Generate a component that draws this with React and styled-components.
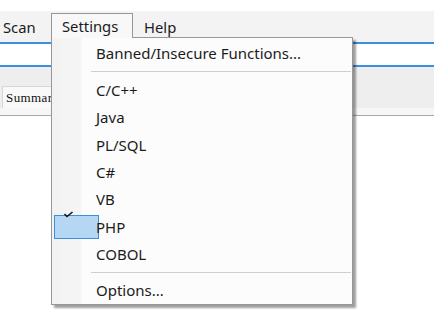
import React from "react";
import styled, { createGlobalStyle } from "styled-components";

const GlobalStyle = createGlobalStyle`
  html, body {
    margin: 0;
    padding: 0;
    background: #ffffff;
  }
  * {
    box-sizing: border-box;
  }
`;

const Page = styled.div`
  position: relative;
  width: 434px;
  height: 334px;
  overflow: hidden;
  background: #ffffff;
  font-family: "Noto Sans", "Open Sans", sans-serif;
  color: #1b1b1b;
`;

const TopGap = styled.div`
  height: 11px;
  background: #ffffff;
`;

const MenuBar = styled.div`
  display: flex;
  align-items: flex-start;
  height: 31px;
  background: #f3f3f3;
`;

const BarItem = styled.div`
  height: 31px;
  width: ${p => p.width}px;
  padding-left: ${p => p.pad}px;
  display: flex;
  align-items: center;
  font-size: 14.8px;
`;

const OpenTab = styled.div`
  position: relative;
  z-index: 3;
  margin-top: 2px;
  width: 82px;
  height: 25px;
  padding-left: 10px;
  display: flex;
  align-items: center;
  font-size: 14.8px;
  background: #f8f8f8;
  border: 1px solid #979797;
  border-bottom: none;
`;

const InputBar = styled.div`
  height: 25px;
  background: #ffffff;
  border-top: 2px solid #3b8fe0;
  border-bottom: 2px solid #3b8fe0;
`;

const TabStrip = styled.div`
  height: 41px;
  background: #eeeeee;
  display: flex;
  align-items: flex-end;
  padding-left: 2px;
`;

const DocTab = styled.div`
  height: 22px;
  width: 70px;
  padding-left: 3px;
  display: flex;
  align-items: center;
  background: #f9f9f9;
  border: 1px solid #d6d6d6;
  border-bottom: none;
  font-family: "Liberation Serif", "DejaVu Serif", serif;
  font-size: 13px;
  letter-spacing: 0.4px;
  color: #111;
`;

const PanelEdge = styled.div`
  height: 8px;
  background: #f6f6f6;
  border-bottom: 1px solid #a3a9b0;
`;

const Dropdown = styled.div`
  position: absolute;
  z-index: 2;
  left: 51px;
  top: 37px;
  width: 302px;
  height: 268px;
  padding-top: 1px;
  border: 1px solid #979797;
  border-top: none;
  background: linear-gradient(to right, #f2f2f2 0, #f5f5f5 29px, #fcfcfc 30px);
  box-shadow: 3px 3px 2px rgba(0, 0, 0, 0.38);

  &::before {
    content: "";
    position: absolute;
    top: 0;
    left: 80px;
    right: -1px;
    height: 1px;
    background: #979797;
  }
`;

const Entry = styled.div`
  position: relative;
  height: ${p => p.h}px;
  padding-left: 44px;
  display: flex;
  align-items: center;
  font-size: 15px;
  color: #1b1b1b;
`;

const EntryText = styled.span`
  position: relative;
  z-index: 1;
`;

const Separator = styled.div`
  height: 9px;
  display: flex;
  align-items: center;
  padding-left: 39px;
  padding-right: 1px;

  &::after {
    content: "";
    flex: 1;
    height: 1px;
    background: #cfcfcf;
  }
`;

const CheckBox = styled.div`
  position: absolute;
  left: 2px;
  top: 2px;
  width: 45px;
  height: 24px;
  background: #b6d7f4;
  border: 1px solid #3d8fd9;
`;

const Tick = styled.svg`
  position: absolute;
  left: 11px;
  top: -2px;
  z-index: 1;
`;

const languages = ["C/C++", "Java", "PL/SQL", "C#", "VB", "PHP", "COBOL"];

const App = () => {
  return (
    <Page>
      <GlobalStyle />
      <TopGap />
      <MenuBar>
        <BarItem width={51} pad={3}>Scan</BarItem>
        <OpenTab>Settings</OpenTab>
        <BarItem width={60} pad={11}>Help</BarItem>
      </MenuBar>
      <InputBar />
      <TabStrip>
        <DocTab>Summary</DocTab>
      </TabStrip>
      <PanelEdge />

      <Dropdown>
        <Entry h={29}>
          <EntryText>Banned/Insecure Functions...</EntryText>
        </Entry>
        <Separator />
        {languages.map(lang => (
          <Entry key={lang} h={27.43}>
            {lang === "PHP" && (
              <>
                <CheckBox />
                <Tick width="11" height="7" viewBox="0 0 11 7">
                  <path d="M1.5 3 L4 5.5 L9.5 1" fill="none" stroke="#111" strokeWidth="1.5" />
                </Tick>
              </>
            )}
            <EntryText>{lang}</EntryText>
          </Entry>
        ))}
        <Separator />
        <Entry h={26}>
          <EntryText>Options...</EntryText>
        </Entry>
      </Dropdown>
    </Page>
  );
};

export default App;
